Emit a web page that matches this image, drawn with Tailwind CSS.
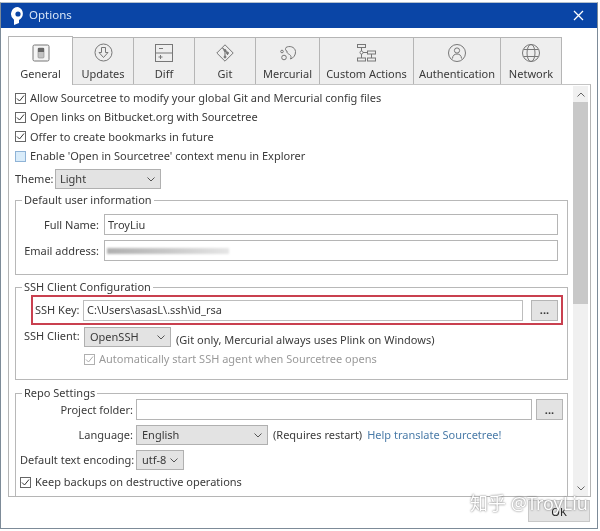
<!DOCTYPE html>
<html>
<head>
<meta charset="utf-8">
<script src="https://cdn.jsdelivr.net/npm/@tailwindcss/browser@4"></script>
</head>
<body class="bg-white w-[600px] h-[531px] overflow-hidden font-['Noto_Sans','Noto_Sans_CJK_SC',sans-serif] text-[11px] leading-[16px] text-[#3a3a3a]">
<div class="relative mt-[2px] w-[598px] h-[527px] border-x border-b border-t border-x-[#7d8b98] border-b-[#7d8b98] border-t-[#b4c0cc] bg-white flex flex-col blur-[0.4px]">
  <!-- title bar -->
  <div class="h-[25px] shrink-0 bg-[#0a45a6] flex items-center pl-[9px] pr-[13px] text-white">
    <svg width="16" height="20" viewBox="0 0 16 20"><path d="M8 1a7 7 0 0 0-4 12.700V19l5-2v-3.100A7 7 0 0 0 8 1z" fill="#fff"/><circle cx="8" cy="8" r="2.600" fill="#0a45a6"/></svg>
    <span class="ml-[3px] text-[11.500px] text-[#d9e6f7] -mt-[2px]">Options</span>
    <svg class="ml-auto" width="11" height="11" viewBox="0 0 11 11"><path d="M1 1l9 9M10 1l-9 9" stroke="#fff" stroke-width="1.300" fill="none"/></svg>
  </div>
  <!-- tabs -->
  <div class="flex items-end h-[56px] pl-[7px] shrink-0">
    <div class="w-[65px] h-[49px] border border-b-0 border-[#b5b5b5] bg-white flex flex-col items-center pt-[7px] relative z-10 -mb-px">
      <svg width="18" height="18" viewBox="0 0 18 18"><rect x="1" y="1" width="16" height="16" rx="1.500" fill="#f4f4f4" stroke="#777"/><rect x="6" y="4" width="6" height="10" rx="1" fill="#c2c2c2" stroke="#888" stroke-width=".6"/><rect x="6" y="4" width="6" height="4" fill="#666"/></svg>
      <span class="mt-[4px]">General</span>
    </div>
    <div class="w-[61px] h-[47px] border border-l-0 border-b-0 border-[#b5b5b5] bg-[#eeeeee] flex flex-col items-center pt-[5px]">
      <svg width="19" height="19" viewBox="0 0 19 19" fill="none" stroke="#777"><circle cx="9.500" cy="9.500" r="8.500"/><path d="M7.500 4.500h4v5h2.500l-4.500 5-4.500-5h2.500z"/></svg>
      <span class="mt-[4px]">Updates</span>
    </div>
    <div class="w-[61px] h-[47px] border border-l-0 border-b-0 border-[#b5b5b5] bg-[#eeeeee] flex flex-col items-center pt-[6px]">
      <svg width="18" height="18" viewBox="0 0 18 18" fill="none" stroke="#777"><rect x=".5" y=".5" width="17" height="17"/><path d="M.5 9h17M4 4.500h4M3.500 13h4M5.500 11v4"/></svg>
      <span class="mt-[4px]">Diff</span>
    </div>
    <div class="w-[61px] h-[47px] border border-l-0 border-b-0 border-[#b5b5b5] bg-[#eeeeee] flex flex-col items-center pt-[6px]">
      <svg width="18" height="18" viewBox="0 0 18 18" fill="none" stroke="#777"><path d="M9 .8L17.200 9 9 17.200.8 9z"/><path d="M6.500 4l5 5M9 6.500v6M11.500 9v2" stroke-width="1.100"/><circle cx="9" cy="13" r="1" fill="#777"/><circle cx="11.500" cy="9" r="1" fill="#777"/><circle cx="9" cy="6.500" r="1" fill="#777"/></svg>
      <span class="mt-[4px]">Git</span>
    </div>
    <div class="w-[64px] h-[47px] border border-l-0 border-b-0 border-[#b5b5b5] bg-[#eeeeee] flex flex-col items-center pt-[7px]">
      <svg width="18" height="17" viewBox="0 0 18 17" fill="none" stroke="#777"><path d="M7 2.500C10 .5 16 1.500 16.500 6.500c.3 3.500-2 6.500-5 7.500 1-2 .5-3.500-1-4.500S7.500 8 8 6c-1.500 0-2-2-1-3.500z"/><circle cx="3" cy="6.500" r="1.300"/><circle cx="5" cy="12.500" r="2.300"/></svg>
      <span class="mt-[4px]">Mercurial</span>
    </div>
    <div class="w-[94px] h-[47px] border border-l-0 border-b-0 border-[#b5b5b5] bg-[#eeeeee] flex flex-col items-center pt-[6px]">
      <svg width="19" height="18" viewBox="0 0 19 18" fill="none" stroke="#777"><rect x=".5" y=".5" width="8" height="3"/><rect x="10.500" y="7" width="8" height="3"/><rect x=".5" y="14" width="8" height="3"/><rect x="10.500" y="14" width="8" height="3"/><path d="M4.500 3.500V14M4.500 8.500h6M14.500 10v4"/><circle cx="4.500" cy="8.500" r="1.500" fill="#fff"/></svg>
      <span class="mt-[4px]">Custom Actions</span>
    </div>
    <div class="w-[87px] h-[47px] border border-l-0 border-b-0 border-[#b5b5b5] bg-[#eeeeee] flex flex-col items-center pt-[6px]">
      <svg width="18" height="18" viewBox="0 0 18 18" fill="none" stroke="#777"><circle cx="9" cy="9" r="8.500"/><circle cx="9" cy="6.500" r="2.600"/><path d="M4.500 14.500c0-3 2-4.500 4.500-4.500s4.500 1.500 4.500 4.500"/></svg>
      <span class="mt-[4px]">Authentication</span>
    </div>
    <div class="w-[61px] h-[47px] border border-l-0 border-b-0 border-[#b5b5b5] bg-[#eeeeee] flex flex-col items-center pt-[6px]">
      <svg width="18" height="18" viewBox="0 0 18 18" fill="none" stroke="#777"><circle cx="9" cy="9" r="8.500"/><ellipse cx="9" cy="9" rx="4" ry="8.500"/><path d="M1.500 5.500h15M1.500 12.500h15"/></svg>
      <span class="mt-[4px]">Network</span>
    </div>
  </div>
  <!-- panel -->
  <div class="ml-[7px] w-[583px] h-[413px] shrink-0 border border-[#b5b5b5] border-t-[#c4c4c4] flex">
    <div class="w-[564px] shrink-0 pl-[6px] pr-[5px] pt-[5px] overflow-hidden">
      <div class="flex flex-col gap-[3.400px]">
        <label class="flex items-center gap-[4px] h-[16px]"><span class="w-[11px] h-[11px] border border-[#666] flex items-center justify-center"><svg width="9" height="9" viewBox="0 0 9 9"><path d="M1 4.500l2.500 2.500L8 1.500" fill="none" stroke="#333"/></svg></span><span>Allow Sourcetree to modify your global Git and Mercurial config files</span></label>
        <label class="flex items-center gap-[4px] h-[16px]"><span class="w-[11px] h-[11px] border border-[#666] flex items-center justify-center"><svg width="9" height="9" viewBox="0 0 9 9"><path d="M1 4.500l2.500 2.500L8 1.500" fill="none" stroke="#333"/></svg></span><span>Open links on Bitbucket.org with Sourcetree</span></label>
        <label class="flex items-center gap-[4px] h-[16px]"><span class="w-[11px] h-[11px] border border-[#666] flex items-center justify-center"><svg width="9" height="9" viewBox="0 0 9 9"><path d="M1 4.500l2.500 2.500L8 1.500" fill="none" stroke="#333"/></svg></span><span>Offer to create bookmarks in future</span></label>
        <label class="flex items-center gap-[4px] h-[16px]"><span class="w-[11px] h-[11px] border border-[#8fb3d6] bg-[#d9ecfa]"></span><span>Enable 'Open in Sourcetree' context menu in Explorer</span></label>
      </div>
      <div class="flex items-center mt-[5px] h-[20px]">
        <span class="w-[40px] whitespace-nowrap">Theme:</span>
        <div class="w-[106px] h-[20px] bg-[#e3e3e3] border border-[#b0b0b0] flex items-center pl-[4px] pr-[5px]">Light<svg class="ml-auto" width="8" height="5" viewBox="0 0 8 5"><path d="M.5.5L4 4 7.500.5" fill="none" stroke="#555"/></svg></div>
      </div>
      <fieldset class="mt-[3px] h-[83px] border border-[#b8b8b8] pl-[8px] pr-[9px]">
        <legend class="-ml-[2px] px-[2px]">Default user information</legend>
        <div class="flex items-center h-[21px] mt-[6px]">
          <span class="w-[80px] pr-[5px] text-right whitespace-nowrap">Full Name:</span>
          <div class="flex-1 h-[21px] border border-[#b5b5b5] flex items-center px-[3px]">TroyLiu</div>
        </div>
        <div class="flex items-center h-[21px] mt-[5px]">
          <span class="w-[80px] pr-[5px] text-right whitespace-nowrap">Email address:</span>
          <div class="flex-1 h-[21px] border border-[#b5b5b5] flex items-center px-[2px]"><div class="w-[122px] h-[6px] bg-gradient-to-r from-[#b0b0b0] via-[#c8c8c8] to-[#e6e6e6] blur-[1px]"></div></div>
        </div>
      </fieldset>
      <fieldset class="mt-[4px] h-[101px] border border-[#b8b8b8] pl-[8px] pr-[4px]">
        <legend class="-ml-[2px] px-[2px]">SSH Client Configuration</legend>
        <div class="ml-[7px] h-[30px] border-[2px] border-[#c9404f] flex items-center pl-[2px] pr-[3px]">
          <span class="w-[48px] whitespace-nowrap">SSH Key:</span>
          <div class="w-[440px] h-[21px] border border-[#bdbdbd] flex items-center px-[3px]">C:\Users\asasL\.ssh\id_rsa</div>
          <div class="ml-[8px] w-[27px] h-[21px] bg-[#e3e3e3] border border-[#b5b5b5] flex items-center justify-center font-bold">...</div>
        </div>
        <div class="flex items-center h-[20px] mt-[2px]">
          <span class="w-[60px] whitespace-nowrap -mt-[2px]">SSH Client:</span>
          <div class="w-[87px] h-[20px] bg-[#e3e3e3] border border-[#b0b0b0] flex items-center pl-[5px] pr-[5px]">OpenSSH<svg class="ml-auto" width="8" height="5" viewBox="0 0 8 5"><path d="M.5.5L4 4 7.500.5" fill="none" stroke="#555"/></svg></div>
          <span class="ml-[5px] mt-[5px]">(Git only, Mercurial always uses Plink on Windows)</span>
        </div>
        <label class="flex items-center gap-[4px] h-[16px] ml-[60px] mt-[4px] text-[#9a9a9a]"><span class="w-[11px] h-[11px] border border-[#b0b0b0] flex items-center justify-center"><svg width="9" height="9" viewBox="0 0 9 9"><path d="M1 4.500l2.500 2.500L8 1.500" fill="none" stroke="#aaa"/></svg></span><span>Automatically start SSH agent when Sourcetree opens</span></label>
      </fieldset>
      <fieldset class="mt-[5px] h-[111px] border border-[#b8b8b8] border-b-0 pl-[4px] pr-[4px]">
        <legend class="ml-[2px] px-[2px]">Repo Settings</legend>
        <div class="flex items-center h-[21px] -mt-[2px]">
          <span class="w-[116px] pr-[3px] text-right whitespace-nowrap">Project folder:</span>
          <div class="w-[396px] h-[21px] border border-[#b5b5b5]"></div>
          <div class="ml-[4px] w-[27px] h-[21px] bg-[#e3e3e3] border border-[#b5b5b5] flex items-center justify-center font-bold">...</div>
        </div>
        <div class="flex items-center h-[20px] mt-[5px]">
          <span class="w-[116px] pr-[3px] text-right whitespace-nowrap">Language:</span>
          <div class="w-[132px] h-[20px] bg-[#e3e3e3] border border-[#b0b0b0] flex items-center pl-[5px] pr-[5px]">English<svg class="ml-auto" width="8" height="5" viewBox="0 0 8 5"><path d="M.5.5L4 4 7.500.5" fill="none" stroke="#555"/></svg></div>
          <span class="ml-[5px]">(Requires restart)</span>
          <span class="ml-[5px] text-[#4a7ba8]">Help translate Sourcetree!</span>
        </div>
        <div class="flex items-center h-[20px] mt-[5px]">
          <span class="w-[116px] pr-[3px] text-right whitespace-nowrap">Default text encoding:</span>
          <div class="w-[48px] h-[20px] bg-[#e3e3e3] border border-[#b0b0b0] flex items-center pl-[5px] pr-[5px]">utf-8<svg class="ml-auto" width="8" height="5" viewBox="0 0 8 5"><path d="M.5.5L4 4 7.500.5" fill="none" stroke="#555"/></svg></div>
        </div>
        <label class="flex items-center gap-[4px] h-[16px] mt-[4px]"><span class="w-[11px] h-[11px] border border-[#666] flex items-center justify-center"><svg width="9" height="9" viewBox="0 0 9 9"><path d="M1 4.500l2.500 2.500L8 1.500" fill="none" stroke="#333"/></svg></span><span>Keep backups on destructive operations</span></label>
      </fieldset>
    </div>
    <!-- scrollbar -->
    <div class="w-[15px] mt-[1px] bg-[#f0f0f0] flex flex-col">
      <div class="h-[16px] flex items-center justify-center"><svg width="8" height="5" viewBox="0 0 8 5"><path d="M.5 4.500L4 1l3.500 3.500" fill="none" stroke="#666"/></svg></div>
      <div class="h-[202px] bg-[#c8c8c8]"></div>
      <div class="mt-auto h-[16px] flex items-center justify-center"><svg width="8" height="5" viewBox="0 0 8 5"><path d="M.5.5L4 4 7.500.5" fill="none" stroke="#666"/></svg></div>
    </div>
  </div>
  <!-- footer -->
  <div class="flex-1 flex justify-end items-start pr-[7px] pt-[3px]">
    <div class="w-[62px] h-[22px] bg-[#e3e3e3] border border-[#c8c8c8] flex items-center justify-center text-[#222] pt-[2px]">OK</div>
  </div>
  <!-- watermark -->
  <div class="absolute right-[9px] top-[490px] text-[18px] leading-[20px] text-white whitespace-nowrap [text-shadow:0_0_2px_#555]">知乎 @TroyLiu</div>
</div>
</body>
</html>
